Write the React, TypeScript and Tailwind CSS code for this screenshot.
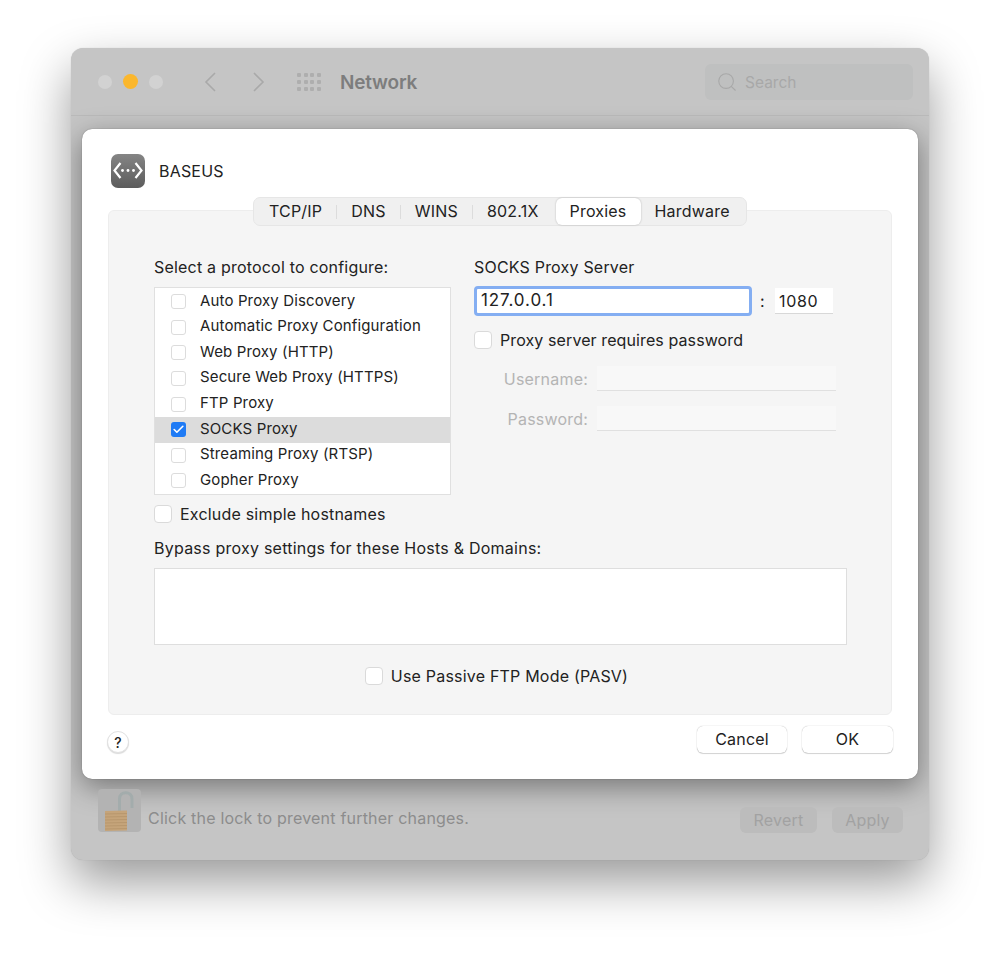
import { Check, Search } from "lucide-react";

const protocols = [
  "Auto Proxy Discovery",
  "Automatic Proxy Configuration",
  "Web Proxy (HTTP)",
  "Secure Web Proxy (HTTPS)",
  "FTP Proxy",
  "SOCKS Proxy",
  "Streaming Proxy (RTSP)",
  "Gopher Proxy",
];

function Box({ small = false, checked = false }: { small?: boolean; checked?: boolean }) {
  if (checked) {
    return (
      <span className="flex size-[15px] shrink-0 items-center justify-center rounded-[3px] bg-[#1f7bf5]">
        <Check className="size-[13px] text-white" strokeWidth={3} />
      </span>
    );
  }
  return (
    <span
      className={
        small
          ? "block size-[15px] shrink-0 rounded-[3px] border border-[#dcdcdc] bg-white"
          : "block size-[18px] shrink-0 rounded-[4px] border border-[#dadada] bg-white"
      }
    />
  );
}

function LockIcon() {
  return (
    <svg width="43" height="43" viewBox="0 0 43 43" fill="none">
      <path d="M21.500 22V10c0-8.500 12.500-8.500 12.500 0v9" stroke="#a3acac" strokeWidth="3" />
      <path d="M7 22L29 21.500V41.500L7 42Z" fill="#c5a47a" />
      <path d="M7 25L29 24.500M7 28L29 27.500M7 31L29 30.500M7 34L29 33.500M7 37L29 36.500M7 40L29 39.500" stroke="#b8976d" strokeWidth="1" />
    </svg>
  );
}

function NetworkIcon() {
  return (
    <svg width="34" height="34" viewBox="0 0 34 34" fill="none" stroke="#fff" strokeWidth="2.200">
      <path d="M9.500 9L3.500 16.500L9.500 24M24.500 9L30.500 16.500L24.500 24" />
      <circle cx="11.500" cy="16.500" r="1.400" fill="#fff" stroke="none" />
      <circle cx="17" cy="16.500" r="1.400" fill="#fff" stroke="none" />
      <circle cx="22.500" cy="16.500" r="1.400" fill="#fff" stroke="none" />
    </svg>
  );
}

function Tab({ label, active = false }: { label: string; active?: boolean }) {
  return (
    <div
      className={
        active
          ? "ml-[3px] flex h-[27px] items-center rounded-[6px] bg-white px-[14px] pb-[1px] shadow-[0_0_2px_rgba(0,0,0,0.25)]"
          : "flex h-[27px] items-center px-[14px] pb-[1px]"
      }
    >
      {label}
    </div>
  );
}

export default function App() {
  return (
    <div className="h-[954px] w-[1000px] overflow-hidden bg-white pl-[71px] pt-[48px] font-['Inter',sans-serif] text-[16px] tracking-[0.2px] text-[#222]">
      <div className="flex h-[812px] w-[858px] flex-col overflow-hidden rounded-[12px] bg-[#c5c5c5] shadow-[0_22px_50px_rgba(0,0,0,0.4),0_0_1px_rgba(0,0,0,0.2)]">
        {/* toolbar */}
        <div className="flex h-[68px] shrink-0 items-center border-b border-[#bababa] pl-[27px] pr-[16px]">
          <span className="size-[14px] rounded-full bg-[#d2d2d2]" />
          <span className="ml-[11px] size-[15px] rounded-full bg-[#fbb72d]" />
          <span className="ml-[11px] size-[14px] rounded-full bg-[#d2d2d2]" />
          <svg className="ml-[41px]" width="12" height="20" viewBox="0 0 12 20" fill="none" stroke="#a9a9a9" strokeWidth="1.600">
            <path d="M11 1L2 10L11 19" />
          </svg>
          <svg className="ml-[37px]" width="12" height="20" viewBox="0 0 12 20" fill="none" stroke="#a9a9a9" strokeWidth="1.600">
            <path d="M1 1L10 10L1 19" />
          </svg>
          <div className="ml-[32px] grid grid-cols-[repeat(4,4px)] gap-x-[2.670px] gap-y-[3px]">
            {Array.from({ length: 12 }).map((_, i) => (
              <span key={i} className="size-[4px] rounded-[1px] bg-[#aeaeae]" />
            ))}
          </div>
          <span className="ml-[19px] mt-[3px] text-[19px] font-semibold tracking-[-0.2px] text-[#7d7d7d]">Network</span>
          <div className="ml-auto flex h-[36px] w-[208px] items-center rounded-[6px] bg-[#bfc0c0] pl-[11px] text-[#a8a8a8]">
            <Search className="mt-[1px] size-[22px]" strokeWidth={1.200} />
            <span className="ml-[7px] mt-[2px] text-[15.500px] tracking-normal">Search</span>
          </div>
        </div>

        {/* sheet */}
        <div className="mx-[11px] mt-[13px] h-[650px] shrink-0 rounded-[10px] bg-white px-[26px] pt-[25px] shadow-[0_8px_28px_rgba(0,0,0,0.4),0_0_1px_rgba(0,0,0,0.5)]">
          <div className="ml-[3px] flex h-[34px] items-center">
            <div className="size-[34px] rounded-[7px] bg-gradient-to-b from-[#858585] to-[#5c5c5c]">
              <NetworkIcon />
            </div>
            <span className="ml-[14px]">BASEUS</span>
          </div>

          <div className="relative z-10 mt-[9px] flex justify-center">
            <div className="flex h-[29px] w-[494px] items-center rounded-[7px] border border-[#e6e6e6] bg-[#f0f0f0] pl-[1px]">
              <Tab label="TCP/IP" />
              <span className="h-[14px] w-px bg-[#dcdcdc]" />
              <Tab label="DNS" />
              <span className="h-[14px] w-px bg-[#dcdcdc]" />
              <Tab label="WINS" />
              <span className="h-[14px] w-px bg-[#dcdcdc]" />
              <Tab label="802.1X" />
              <Tab label="Proxies" active />
              <Tab label="Hardware" />
            </div>
          </div>

          <div className="-mt-[16px] h-[505px] rounded-[6px] border border-[#ededed] bg-[#f5f5f5] pl-[45px] pt-[46px]">
            <div className="flex">
              <div className="w-[297px]">
                <div className="h-[20px] leading-[20px]">Select a protocol to configure:</div>
                <div className="mt-[10px] h-[208px] border border-[#e0e0e0] bg-white pt-[1px] text-[15px] tracking-[0.14px]">
                  {protocols.map((name) => (
                    <div
                      key={name}
                      className={
                        name === "SOCKS Proxy"
                          ? "flex h-[25.600px] items-center gap-[14px] bg-[#dcdcdc] pl-[16px]"
                          : "flex h-[25.600px] items-center gap-[14px] pl-[16px]"
                      }
                    >
                      <Box small checked={name === "SOCKS Proxy"} />
                      <span className="pb-[2px]">{name}</span>
                    </div>
                  ))}
                </div>
                <div className="mt-[10px] flex h-[18px] items-center gap-[8px]">
                  <Box />
                  <span>Exclude simple hostnames</span>
                </div>
              </div>

              <div className="ml-[23px]">
                <div className="h-[20px] leading-[20px]">SOCKS Proxy Server</div>
                <div className="mt-[9px] flex items-center">
                  <div className="flex h-[30px] w-[278px] items-center rounded-[4px] border-[3px] border-[#84aef2] bg-white pl-[4px] text-[17px] tracking-[0.9px]">
                    127.0.0.1
                  </div>
                  <span className="ml-[8px] w-[15px]">:</span>
                  <div className="flex h-[26px] w-[58px] items-center border-b border-[#d8d8d8] bg-white pl-[4px] tracking-[0.7px]">1080</div>
                </div>
                <div className="mt-[15px] flex h-[18px] items-center gap-[8px] tracking-[0.1px]">
                  <Box />
                  <span>Proxy server requires password</span>
                </div>
                <div className="mt-[17px] flex h-[25px] items-center text-[#b4b4b4]">
                  <span className="w-[114px] text-right">Username:</span>
                  <div className="ml-[9px] h-[25px] w-[239px] border-b border-[#e0e0e0] bg-[#f8f8f8]" />
                </div>
                <div className="mt-[15px] flex h-[25px] items-center text-[#b4b4b4]">
                  <span className="w-[114px] text-right">Password:</span>
                  <div className="ml-[9px] h-[25px] w-[239px] border-b border-[#e0e0e0] bg-[#f8f8f8]" />
                </div>
              </div>
            </div>

            <div className="mt-[15px] h-[20px] leading-[20px] tracking-[0.24px]">Bypass proxy settings for these Hosts &amp; Domains:</div>
            <div className="mt-[10px] h-[77px] w-[693px] border border-[#dedede] bg-white" />
            <div className="mt-[22px] flex h-[18px] w-[693px] items-center justify-center gap-[8px] pr-[8px]">
              <Box />
              <span>Use Passive FTP Mode (PASV)</span>
            </div>
          </div>

          <div className="-mr-[1px] mt-[11px] flex items-start">
            <div className="-ml-[1px] mt-[5px] flex size-[22px] items-center justify-center rounded-full border border-[#e2e2e2] bg-white text-[14px] font-medium shadow-[0_1px_1px_rgba(0,0,0,0.15)]">
              ?
            </div>
            <div className="ml-auto flex h-[27px] w-[90px] items-center justify-center rounded-[6px] bg-white pb-[1px] shadow-[0_0_1px_rgba(0,0,0,0.35),0_1px_1px_rgba(0,0,0,0.15)]">
              Cancel
            </div>
            <div className="ml-[15px] flex h-[27px] w-[91px] items-center justify-center rounded-[6px] bg-white pb-[1px] shadow-[0_0_1px_rgba(0,0,0,0.35),0_1px_1px_rgba(0,0,0,0.15)]">
              OK
            </div>
          </div>
        </div>

        {/* footer */}
        <div className="flex items-start pl-[27px] pr-[26px] pt-[10px]">
          <div className="size-[43px] shrink-0 rounded-[4px] bg-[#b3b3b3]">
            <LockIcon />
          </div>
          <span className="ml-[7px] mt-[17px] text-[#8c8c8c]">Click the lock to prevent further changes.</span>
          <div className="ml-auto mt-[18px] flex h-[26px] w-[77px] items-center justify-center rounded-[6px] bg-[#bcbcbc] pb-[1px] text-[#a2a2a2]">
            Revert
          </div>
          <div className="ml-[15px] mt-[18px] flex h-[26px] w-[71px] items-center justify-center rounded-[6px] bg-[#bcbcbc] pb-[1px] text-[#a2a2a2]">
            Apply
          </div>
        </div>
      </div>
    </div>
  );
}
